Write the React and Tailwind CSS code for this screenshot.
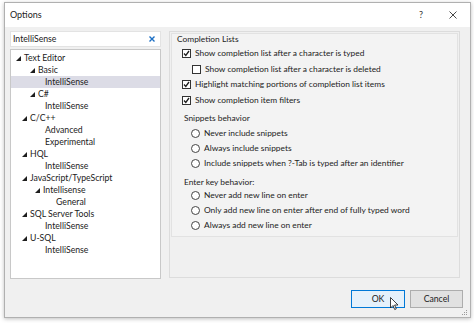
import React from "react";

const F = { fontFamily: 'Lato, "Open Sans", sans-serif' };

function Tri() {
  return (
    <svg width="5" height="5" viewBox="0 0 5 5" className="shrink-0">
      <polygon points="5,0 5,5 0,5" fill="#1e1e1e" />
    </svg>
  );
}

const tree = [
  { t: "Text Editor", tri: true, pl: "pl-[5px]" },
  { t: "Basic", tri: true, pl: "pl-[19px]" },
  { t: "IntelliSense", pl: "pl-[34px]", sel: true },
  { t: "C#", tri: true, pl: "pl-[19px]" },
  { t: "IntelliSense", pl: "pl-[34px]" },
  { t: "C/C++", tri: true, pl: "pl-[11px]" },
  { t: "Advanced", pl: "pl-[34px]" },
  { t: "Experimental", pl: "pl-[34px]" },
  { t: "HQL", tri: true, pl: "pl-[11px]" },
  { t: "IntelliSense", pl: "pl-[34px]" },
  { t: "JavaScript/TypeScript", tri: true, pl: "pl-[11px]" },
  { t: "Intellisense", tri: true, pl: "pl-[24px]" },
  { t: "General", pl: "pl-[45px]" },
  { t: "SQL Server Tools", tri: true, pl: "pl-[11px]" },
  { t: "IntelliSense", pl: "pl-[34px]" },
  { t: "U-SQL", tri: true, pl: "pl-[11px]" },
  { t: "IntelliSense", pl: "pl-[34px]" },
];

function Check({ checked }) {
  return (
    <span className="w-[9px] h-[9px] border border-[#333] bg-white flex items-center justify-center shrink-0">
      {checked && (
        <svg width="7" height="7" viewBox="0 0 7 7">
          <path d="M1 3.5 L2.8 5.5 L6 1" fill="none" stroke="#1e1e1e" strokeWidth="1.3" />
        </svg>
      )}
    </span>
  );
}

function Radio() {
  return <span className="w-[9px] h-[9px] rounded-full border border-[#444] bg-white shrink-0" />;
}

export default function App() {
  return (
    <div className="w-[474px] h-[323px] bg-white overflow-hidden pt-[2px] pl-[4px]" style={F}>
      <div className="w-[467px] h-[316px] border border-[#b0b0b0] bg-[#f0f0f0] flex flex-col shadow-[0_1px_4px_rgba(0,0,0,0.25)] text-[#222]">
        {/* title bar */}
        <div className="h-[24px] bg-white flex items-center pl-[5px] pr-[13px] shrink-0">
          <span className="text-[9px] text-[#222]">Options</span>
          <span className="ml-auto text-[9px] text-[#333] mr-[26px]">?</span>
          <svg width="8" height="8" viewBox="0 0 8 8">
            <path d="M0.5 0.5 L7.5 7.5 M7.5 0.5 L0.5 7.5" stroke="#333" strokeWidth="0.9" />
          </svg>
        </div>
        {/* body */}
        <div className="flex pl-[5px] pt-[4px]">
          <div className="w-[151px] flex flex-col gap-[2px]">
            <div className="h-[16px] bg-white border border-[#e3e3e3] flex items-center pl-[2px] pr-[5px]">
              <span className="text-[8.7px]">IntelliSense</span>
              <svg className="ml-auto" width="6" height="6" viewBox="0 0 6 6">
                <path d="M0.5 0.5 L5.5 5.5 M5.5 0.5 L0.5 5.5" stroke="#1c6fc4" strokeWidth="1.4" />
              </svg>
            </div>
            <div className="h-[230px] bg-white border border-[#c8c8c8] pt-[2px]">
              {tree.map((r, i) => (
                <div
                  key={i}
                  className={`h-[12px] flex items-center gap-[3px] ${r.pl} ${r.sel ? "bg-[#dcdce6]" : ""}`}
                >
                  {r.tri && <Tri />}
                  <span className="text-[8.7px] leading-none">{r.t}</span>
                </div>
              ))}
            </div>
          </div>
          <div className="ml-[8px] w-[291px] h-[247px] border border-[#dcdcdc] p-[1px]">
            <div className="h-[204px] border border-[#e2e2e2] bg-[#f3f3f3] pl-[5px] text-[8.4px]">
              <div className="h-[10px] flex items-center">Completion Lists</div>
              <div className="flex flex-col pl-[5px] mt-[2px]">
                <div className="h-[15.5px] flex items-center gap-[4px]"><Check checked /><span>Show completion list after a character is typed</span></div>
                <div className="h-[15.5px] flex items-center gap-[4px] pl-[10px]"><Check /><span>Show completion list after a character is deleted</span></div>
                <div className="h-[15.5px] flex items-center gap-[4px]"><Check checked /><span>Highlight matching portions of completion list items</span></div>
                <div className="h-[15.5px] flex items-center gap-[4px]"><Check checked /><span>Show completion item filters</span></div>
              </div>
              <div className="pl-[7px] mt-[4px] h-[12px] flex items-center">Snippets behavior</div>
              <div className="flex flex-col pl-[14px] mt-[1.5px]">
                <div className="h-[15px] flex items-center gap-[4px]"><Radio /><span>Never include snippets</span></div>
                <div className="h-[15px] flex items-center gap-[4px]"><Radio /><span>Always include snippets</span></div>
                <div className="h-[15px] flex items-center gap-[4px]"><Radio /><span>Include snippets when ?-Tab is typed after an identifier</span></div>
              </div>
              <div className="pl-[7px] mt-[5.5px] h-[12px] flex items-center">Enter key behavior:</div>
              <div className="flex flex-col pl-[14px]">
                <div className="h-[15px] flex items-center gap-[4px]"><Radio /><span>Never add new line on enter</span></div>
                <div className="h-[15px] flex items-center gap-[4px]"><Radio /><span>Only add new line on enter after end of fully typed word</span></div>
                <div className="h-[15px] flex items-center gap-[4px]"><Radio /><span>Always add new line on enter</span></div>
              </div>
            </div>
          </div>
        </div>
        {/* footer */}
        <div className="flex justify-end gap-[5px] pr-[7px] mt-[11px] relative">
          <div className="relative w-[54px] h-[18px] bg-[#e5f1fb] border border-[#0078d7] flex items-center justify-center text-[8.7px]">
            OK
            <svg className="absolute left-[38px] top-[6px]" width="9" height="14" viewBox="0 0 9 14">
              <path d="M0.5 0.5 L0.5 11 L3 8.5 L4.7 12.5 L6.3 11.8 L4.6 8 L8 8 Z" fill="white" stroke="#111" strokeWidth="0.8" strokeLinejoin="round" />
            </svg>
          </div>
          <div className="w-[53px] h-[18px] bg-[#e1e1e1] border border-[#adadad] flex items-center justify-center text-[8.7px]">Cancel</div>
        </div>
        <div className="flex justify-end pr-[2px] mt-[2px]">
          <svg width="6" height="6" viewBox="0 0 6 6">
            <rect x="4" y="0" width="1" height="1" fill="#999" />
            <rect x="2" y="2" width="1" height="1" fill="#999" />
            <rect x="4" y="2" width="1" height="1" fill="#999" />
            <rect x="0" y="4" width="1" height="1" fill="#999" />
            <rect x="2" y="4" width="1" height="1" fill="#999" />
            <rect x="4" y="4" width="1" height="1" fill="#999" />
          </svg>
        </div>
      </div>
    </div>
  );
}
